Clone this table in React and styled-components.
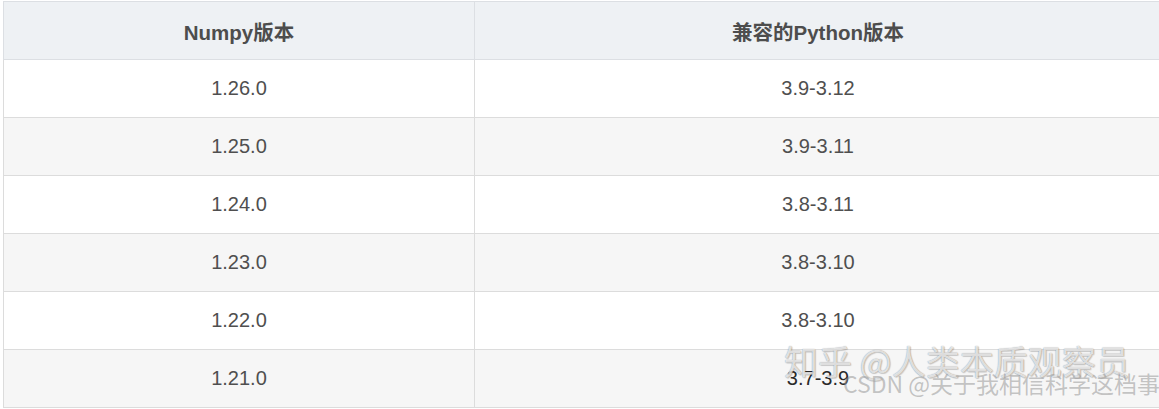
import styled, { createGlobalStyle } from 'styled-components';

const GlobalStyle = createGlobalStyle`
  html, body {
    margin: 0;
    padding: 0;
    background: #ffffff;
    overflow: hidden;
  }
  body {
    font-family: 'Liberation Sans', Arial, 'Noto Sans CJK SC', sans-serif;
  }
`;

const Page = styled.div`
  position: relative;
  width: 1159px;
  height: 409px;
  padding: 1px 0 0 3px;
  box-sizing: border-box;
  overflow: hidden;
`;

const Table = styled.table`
  width: 1159px;
  border-collapse: collapse;
  table-layout: fixed;
  color: #4f4f4f;
`;

const HeadCell = styled.th`
  height: 57px;
  padding: 0;
  background: #eef1f4;
  border: 1px solid #dcdfe3;
  font-size: 20.5px;
  font-weight: 700;
  text-align: center;
  color: #4d4d4d;
  font-family: 'Liberation Sans', Arial, 'Noto Sans CJK SC', sans-serif;
`;

const Row = styled.tr`
  background: ${(p) => (p.$striped ? '#f6f6f6' : '#ffffff')};
`;

const Cell = styled.td`
  height: 57px;
  padding: 0;
  border: 1px solid #dcdcdc;
  font-size: 20px;
  text-align: center;
  color: ${(p) => (p.$dark ? '#2a2a2a' : '#4f4f4f')};
`;

// watermarks lie over the last row of the table
const ZhihuMark = styled.div`
  position: absolute;
  left: 784px;
  top: 344px;
  white-space: nowrap;
  pointer-events: none;
  font-family: 'Noto Sans CJK SC', 'Liberation Sans', sans-serif;
  font-size: 34px;
  line-height: 1;
  color: rgba(255, 255, 255, 0.75);
  text-shadow: 0 0 1px rgba(0, 0, 0, 0.45), 1px 1px 1px rgba(0, 0, 0, 0.15);
`;

const CsdnMark = styled.div`
  position: absolute;
  left: 843px;
  top: 372px;
  white-space: nowrap;
  pointer-events: none;
  font-family: 'Noto Sans CJK SC', 'Liberation Sans', sans-serif;
  font-size: 23px;
  line-height: 1;
  color: rgba(150, 150, 150, 0.55);
`;

const rows = [
  ['1.26.0', '3.9-3.12'],
  ['1.25.0', '3.9-3.11'],
  ['1.24.0', '3.8-3.11'],
  ['1.23.0', '3.8-3.10'],
  ['1.22.0', '3.8-3.10'],
  ['1.21.0', '3.7-3.9'],
];

export default function App() {
  return (
    <>
      <GlobalStyle />
      <Page>
        <Table>
          <colgroup>
            <col style={{ width: 471 }} />
            <col />
          </colgroup>
          <thead>
            <tr>
              <HeadCell>Numpy版本</HeadCell>
              <HeadCell>兼容的Python版本</HeadCell>
            </tr>
          </thead>
          <tbody>
            {rows.map(([np, py], i) => (
              <Row key={np} $striped={i % 2 === 1}>
                <Cell>{np}</Cell>
                <Cell $dark={i === rows.length - 1}>{py}</Cell>
              </Row>
            ))}
          </tbody>
        </Table>
        <ZhihuMark>知乎 @人类本质观察员</ZhihuMark>
        <CsdnMark>CSDN @关于我相信科学这档事</CsdnMark>
      </Page>
    </>
  );
}
